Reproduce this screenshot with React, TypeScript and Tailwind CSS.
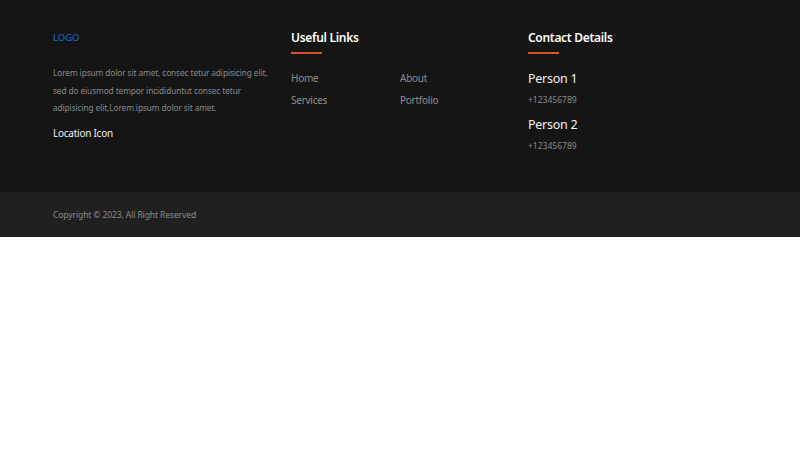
import React from "react";

export default function App() {
  const font = { fontFamily: '"Noto Sans", "Open Sans", sans-serif' };
  return (
    <div style={font} className="w-[800px] h-[450px] bg-white">
      <footer>
        <div className="bg-[#151515] h-[192px] pl-[53px] pt-[31px]">
          <div className="grid grid-cols-[238px_237px_237px]">
            <div>
              <div className="text-[9.5px] leading-[14px] text-[#1a6fd6]">LOGO</div>
              <p className="mt-[19px] text-[8.3px] leading-[17.5px] tracking-[-0.1px] text-[#8a8a8a] w-[222px]">
                Lorem ipsum dolor sit amet, consec tetur adipisicing elit, sed do eiusmod tempor incididuntut consec tetur adipisicing elit,Lorem ipsum dolor sit amet.
              </p>
              <div className="mt-[9px] text-[10px] leading-[14px] tracking-[-0.25px] text-[#f0f0f0]">Location Icon</div>
            </div>
            <div>
              <h3 className="text-[12px] leading-[14px] font-semibold tracking-[-0.3px] text-white">Useful Links</h3>
              <div className="mt-[7px] w-[31px] h-[2px] bg-[#d9532b]"></div>
              <div className="mt-[17px] grid grid-cols-[109px_109px] gap-y-[8px] text-[10px] leading-[14px] tracking-[-0.25px] text-[#8e8e8e]">
                <span>Home</span>
                <span>About</span>
                <span>Services</span>
                <span>Portfolio</span>
              </div>
            </div>
            <div>
              <h3 className="text-[12px] leading-[14px] font-semibold tracking-[-0.3px] text-white">Contact Details</h3>
              <div className="mt-[7px] w-[31px] h-[2px] bg-[#d9532b]"></div>
              <div className="mt-[16px] text-[12.5px] leading-[18px] tracking-[-0.25px] text-[#f0f0f0]">Person 1</div>
              <div className="mt-[6px] text-[8.5px] leading-[12px] text-[#8a8a8a]">+123456789</div>
              <div className="mt-[10px] text-[12.5px] leading-[18px] tracking-[-0.25px] text-[#f0f0f0]">Person 2</div>
              <div className="mt-[6px] text-[8.5px] leading-[12px] text-[#8a8a8a]">+123456789</div>
            </div>
          </div>
        </div>
        <div className="bg-[#202020] h-[45px] pl-[53px] pt-[16px]">
          <span className="block text-[8.5px] leading-[14px] tracking-[-0.1px] text-[#8a8a8a]">Copyright © 2023, All Right Reserved</span>
        </div>
      </footer>
    </div>
  );
}
